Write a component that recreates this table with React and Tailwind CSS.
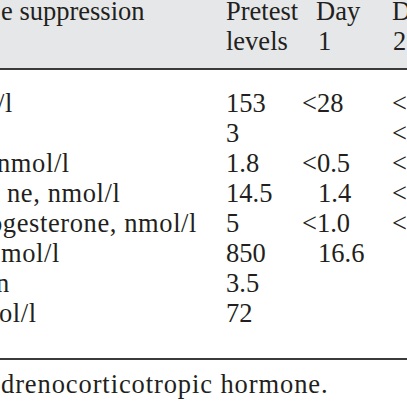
const rows = [
  { label: '/l', off: '-ml-[3px]', pre: '153', d1: '<28', d2: '<2' },
  { label: '', off: '', pre: '3', d1: '', d2: '<3' },
  { label: 'nmol/l', off: '-ml-[3px]', pre: '1.8', d1: '<0.5', d2: '<0' },
  { label: 'ne, nmol/l', off: 'ml-[7px]', pre: '14.5', d1: '1.4', d2: '<1' },
  { label: 'ogesterone, nmol/l', off: '-ml-[11px]', pre: '5', d1: '<1.0', d2: '<1' },
  { label: 'mol/l', off: 'ml-[1px]', pre: '850', d1: '16.6', d2: '' },
  { label: 'n', off: '-ml-[4px]', pre: '3.5', d1: '', d2: '' },
  { label: 'ol/l', off: '-ml-[1px]', pre: '72', d1: '', d2: '' },
];

function Cell({ value, hang }) {
  // values without "<" are pushed in so the digits line up under the ones after "<"
  if (!value) return null;
  const lt = value.startsWith('<');
  return <span className={hang && !lt ? 'pl-[16px]' : ''}>{value}</span>;
}

export default function App() {
  return (
    <div className="w-[407px] h-[407px] overflow-hidden bg-white text-[#231f20] font-[family-name:Liberation_Serif,serif] text-[26.5px] leading-[30px] whitespace-nowrap">
      <div className="h-[70px] bg-[#e6e7e8] border-b-2 border-[#3b3b3b] flex">
        <div className="w-[226px] shrink-0 overflow-hidden -mt-[4px]">
          <div className="ml-[1px]">e suppression</div>
        </div>
        <div className="w-[76px] shrink-0 -mt-[4px]">
          <div>Pretest</div>
          <div>levels</div>
        </div>
        <div className="w-[90px] shrink-0 -mt-[4px] pl-[14px]">
          <div>Day</div>
          <div className="pl-[2px]">1</div>
        </div>
        <div className="flex-1 min-w-0 -mt-[4px]">
          <div>Day</div>
          <div className="pl-[1px]">2</div>
        </div>
      </div>

      <div className="pt-[18px] pb-[30px] border-b-2 border-[#3b3b3b]">
        {rows.map((r, i) => (
          <div key={i} className="flex h-[30px]">
            <div className="w-[226px] shrink-0 overflow-hidden">
              <div className={`${r.off} tracking-[0.6px]`}>{r.label}</div>
            </div>
            <div className="w-[76px] shrink-0">{r.pre}</div>
            <div className="w-[90px] shrink-0">
              <Cell value={r.d1} hang />
            </div>
            <div className="flex-1 min-w-0">
              <Cell value={r.d2} />
            </div>
          </div>
        ))}
      </div>

      <div className="pt-[9px] ml-[1px] tracking-[0.9px]">drenocorticotropic hormone.</div>
    </div>
  );
}
